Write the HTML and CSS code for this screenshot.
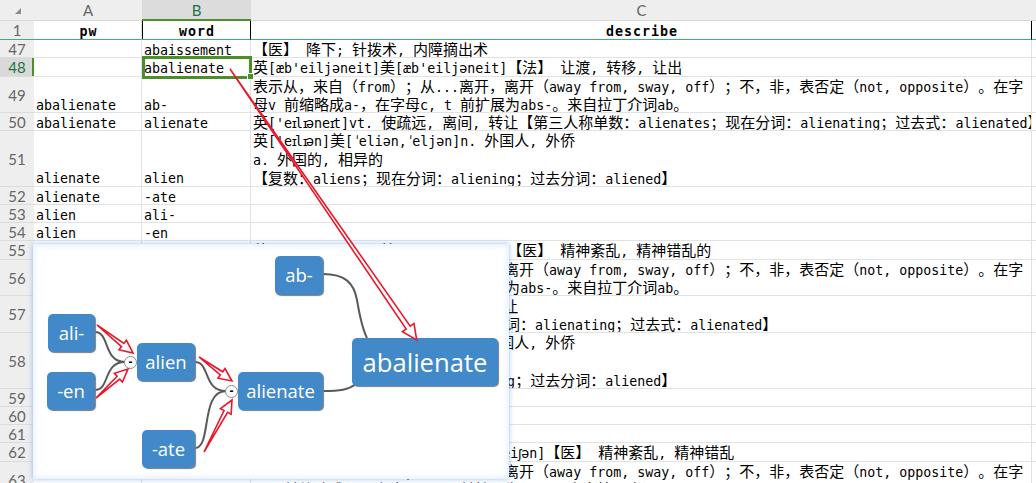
FILE: index.html
```html
<!DOCTYPE html>
<html lang="zh">
<head>
<meta charset="utf-8">
<title>word roots sheet</title>
<link rel="stylesheet" href="styles.css">
</head>
<body>
<div class="sheet">
  <div class="row head">
    <div class="rh corner"><span class="tri"></span></div>
    <div class="ch col-a">A</div>
    <div class="ch col-b on">B</div>
    <div class="ch col-c">C</div>
    <div class="ch col-r"></div>
  </div>
  <div class="row h19 frozen">
    <div class="rh">1</div>
    <div class="cell col-a t"><span>pw</span></div>
    <div class="cell col-b t edge"><span>word</span></div>
    <div class="cell col-c t edge"><span>describe</span></div>
    <div class="col-r"></div>
  </div>
  <div class="row h18">
    <div class="rh">47</div><div class="cell col-a"></div><div class="cell col-b">abaissement</div>
    <div class="cell col-c"><span class="z">【医】</span> <span class="z">降下</span>; <span class="z">针拨术</span>, <span class="z">内障摘出术</span></div><div class="col-r"></div>
  </div>
  <div class="row h19">
    <div class="rh sel-rh">48</div><div class="cell col-a"></div><div class="cell col-b sel">abalienate</div>
    <div class="cell col-c"><span class="z">英</span>[æb'eiljəneit]<span class="z">美</span>[æb'eiljəneit]<span class="z">【法】</span> <span class="z">让渡</span>, <span class="z">转移</span>, <span class="z">让出</span></div><div class="col-r"></div>
  </div>
  <div class="row h36">
    <div class="rh">49</div><div class="cell col-a">abalienate</div><div class="cell col-b">ab-</div>
    <div class="cell col-c"><span class="z">表示从，来自（</span>from<span class="z">）；从</span>...<span class="z">离开，离开（</span>away from, sway, off<span class="z">）；不，非，表否定（</span>not, opposite<span class="z">）。在字</span><br><span class="z">母</span>v <span class="z">前缩略成</span>a-<span class="z">，在字母</span>c, t <span class="z">前扩展为</span>abs-<span class="z">。来自拉丁介词</span>ab<span class="z">。</span></div><div class="col-r"></div>
  </div>
  <div class="row h18">
    <div class="rh">50</div><div class="cell col-a">abalienate</div><div class="cell col-b">alienate</div>
    <div class="cell col-c"><span class="z">英</span>['e<span class="n">ɪ</span>l<span class="n">ɪ</span>əne<span class="n">ɪ</span>t]vt. <span class="z">使疏远</span>, <span class="z">离间</span>, <span class="z">转让【第三人称单数：</span>alienates<span class="z">；现在分词：</span>alienating<span class="z">；过去式：</span>alienated<span class="z">】</span></div><div class="col-r"></div>
  </div>
  <div class="row h56">
    <div class="rh">51</div><div class="cell col-a">alienate</div><div class="cell col-b">alien</div>
    <div class="cell col-c"><span class="z">英</span>['e<span class="n">ɪ</span>l<span class="n">ɪ</span>ən]<span class="z">美</span>[<span class="q">ˈ</span>eliən,<span class="q">ˈ</span>eljən]n. <span class="z">外国人</span>, <span class="z">外侨</span><br>a. <span class="z">外国的</span>, <span class="z">相异的</span><br><span class="z">【复数：</span>aliens<span class="z">；现在分词：</span>aliening<span class="z">；过去分词：</span>aliened<span class="z">】</span></div><div class="col-r"></div>
  </div>
  <div class="row h18"><div class="rh">52</div><div class="cell col-a">alienate</div><div class="cell col-b">-ate</div><div class="cell col-c"></div><div class="col-r"></div></div>
  <div class="row h18"><div class="rh">53</div><div class="cell col-a">alien</div><div class="cell col-b">ali-</div><div class="cell col-c"></div><div class="col-r"></div></div>
  <div class="row h18"><div class="rh">54</div><div class="cell col-a">alien</div><div class="cell col-b">-en</div><div class="cell col-c"></div><div class="col-r"></div></div>
  <div class="row h19">
    <div class="rh">55</div><div class="cell col-a"></div><div class="cell col-b"></div>
    <div class="cell col-c"><span class="z">英</span>[æb'eiljəneit]<span class="z">美</span>[æb'eiljəneit]<span class="z">【医】</span> <span class="z">精神紊乱</span>, <span class="z">精神错乱的</span></div><div class="col-r"></div>
  </div>
  <div class="row h36">
    <div class="rh">56</div><div class="cell col-a"></div><div class="cell col-b"></div>
    <div class="cell col-c"><span class="z">表示从，来自（</span>from<span class="z">）；从</span>...<span class="z">离开，离开（</span>away from, sway, off<span class="z">）；不，非，表否定（</span>not, opposite<span class="z">）。在字</span><br><span class="z">母</span>v <span class="z">前缩略成</span>a-<span class="z">，在字母</span>c, t <span class="z">前扩展为</span>abs-<span class="z">。来自拉丁介词</span>ab<span class="z">。</span></div><div class="col-r"></div>
  </div>
  <div class="row h37">
    <div class="rh">57</div><div class="cell col-a"></div><div class="cell col-b"></div>
    <div class="cell col-c"><span class="z">英</span>['e<span class="n">ɪ</span>l<span class="n">ɪ</span>əne<span class="n">ɪ</span>t]vt. <span class="z">使疏远</span>, <span class="z">离间</span>, <span class="z">转让</span><br><span class="z">【第三人称单数：</span>alienates<span class="z">；现在分词：</span>alienating<span class="z">；过去式：</span>alienated<span class="z">】</span></div><div class="col-r"></div>
  </div>
  <div class="row h56">
    <div class="rh">58</div><div class="cell col-a"></div><div class="cell col-b"></div>
    <div class="cell col-c"><span class="z">英</span>['e<span class="n">ɪ</span>l<span class="n">ɪ</span>ən]<span class="z">美</span>[<span class="q">ˈ</span>eliən,<span class="q">ˈ</span>eljən]n. <span class="z">外国人</span>, <span class="z">外侨</span><br>a. <span class="z">外国的</span>, <span class="z">相异的</span><br><span class="z">【复数：</span>aliens<span class="z">；现在分词：</span>aliening<span class="z">；过去分词：</span>aliened<span class="z">】</span></div><div class="col-r"></div>
  </div>
  <div class="row h18"><div class="rh">59</div><div class="cell col-a"></div><div class="cell col-b"></div><div class="cell col-c"></div><div class="col-r"></div></div>
  <div class="row h18"><div class="rh">60</div><div class="cell col-a"></div><div class="cell col-b"></div><div class="cell col-c"></div><div class="col-r"></div></div>
  <div class="row h18"><div class="rh">61</div><div class="cell col-a"></div><div class="cell col-b"></div><div class="cell col-c"></div><div class="col-r"></div></div>
  <div class="row h19">
    <div class="rh">62</div><div class="cell col-a"></div><div class="cell col-b"></div>
    <div class="cell col-c"><span class="z">英</span>[æb,eiljə'nei<span class="s">ʃ</span>ən]<span class="z">美</span>[æb,eiljə'nei<span class="s">ʃ</span>ən]<span class="z">【医】</span> <span class="z">精神紊乱</span>, <span class="z">精神错乱</span></div><div class="col-r"></div>
  </div>
  <div class="row h36">
    <div class="rh">63</div><div class="cell col-a"></div><div class="cell col-b"></div>
    <div class="cell col-c"><span class="z">表示从，来自（</span>from<span class="z">）；从</span>...<span class="z">离开，离开（</span>away from, sway, off<span class="z">）；不，非，表否定（</span>not, opposite<span class="z">）。在字</span><br><span class="z">母</span>v <span class="z">前缩略成</span>a-<span class="z">，在字母</span>c, t <span class="z">前扩展为</span>abs-<span class="z">。来自拉丁介词</span>ab<span class="z">。</span></div><div class="col-r"></div>
  </div>

  <div class="panel">
    <svg class="links" width="476" height="235" viewBox="33 244 476 235" aria-hidden="true">
      <g class="link">
        <path d="M95 332C110 332 103 362 125 362"/>
        <path d="M95 390C110 390 103 362 125 362"/>
        <path d="M195 362C210 362 203 391 226 391"/>
        <path d="M195 448C212 448 200 391 226 391"/>
        <path d="M323 274C345 274 354 283 357 300C360 318 362 328 367 338"/>
        <path d="M323 391C340 391 348 390 356 384"/>
      </g>
    </svg>
    <div class="node n-ab">ab-</div>
    <div class="node n-ali">ali-</div>
    <div class="node n-en">-en</div>
    <div class="node n-alien">alien</div>
    <div class="node n-alienate">alienate</div>
    <div class="node n-ate">-ate</div>
    <div class="node n-root">abalienate</div>
    <div class="fold f1">-</div>
    <div class="fold f2">-</div>
  </div>

  <svg class="arrows" width="1036" height="483" viewBox="0 0 1036 483" aria-hidden="true">
    <polygon points="230,69 410.2,326.2 414,323.6 416.7,340 402.4,331.6 406.2,329"/>
    <polygon points="97,325 123.9,343.4 126.4,340.3 133,353 119,349.7 121.5,346.6"/>
    <polygon points="96,398 119.7,379.2 122.4,382.1 128,369 114.4,373.3 117.1,376.2"/>
    <polygon points="199,357 222.7,371.8 225,368.5 232,381 218,378.3 220.3,375"/>
    <polygon points="204,452 227.6,412.4 231.1,414.3 232,400 220.5,408.7 224,410.6"/>
  </svg>
</div>
</body>
</html>
```

FILE: styles.css
```css
html, body {
  margin: 0;
  padding: 0;
  background: #fff;
}

.sheet {
  position: relative;
  width: 1036px;
  height: 483px;
  overflow: hidden;
  font-family: "DejaVu Sans Mono", "Noto Sans CJK SC", monospace;
  font-size: 13.3px;
  color: #000;
}

.row {
  display: flex;
}

.head { height: 21px; }
.h18 { height: 18px; }
.h19 { height: 19px; }
.h36 { height: 36px; }
.h37 { height: 37px; }
.h56 { height: 56px; }

.rh {
  flex: none;
  box-sizing: border-box;
  width: 34px;
  display: flex;
  align-items: center;
  justify-content: center;
  background: #eeeeee;
  color: #666;
  font-family: Lato, "Liberation Sans", sans-serif;
  font-size: 15px;
  border-bottom: 1px solid #dcdcdc;
}

.corner {
  position: relative;
  border-bottom: 1px solid #d8d8d8;
}

.tri {
  position: absolute;
  left: 15px;
  top: 8px;
  width: 0;
  height: 0;
  border-left: 6px solid transparent;
  border-bottom: 6px solid #8c8c8c;
}

.sel-rh {
  background: #d9d9d9;
  color: #217346;
  box-shadow: inset -2px 0 0 #4a8f2a;
}

.ch {
  box-sizing: border-box;
  display: flex;
  align-items: center;
  justify-content: center;
  background: #eeeeee;
  color: #666;
  font-family: Lato, "Liberation Sans", sans-serif;
  font-size: 15px;
  border-bottom: 1px solid #d8d8d8;
}

.ch.on {
  background: #dcdcdc;
  color: #217346;
  border-bottom: 2px solid #4a8f2a;
}

.col-a { flex: none; width: 108px; }
.col-b { flex: none; width: 109px; }
.col-c { flex: none; width: 781px; }
.col-r { flex: none; width: 4px; box-sizing: border-box; border-bottom: 1px solid #e2e2e2; }
.ch.col-r { border-bottom: 1px solid #d8d8d8; }

.cell {
  box-sizing: border-box;
  padding: 2px 0 0 2px;
  border-right: 1px solid #e2e2e2;
  border-bottom: 1px solid #e2e2e2;
  line-height: 18px;
  white-space: nowrap;
  overflow: hidden;
}

.h56 .cell { padding-top: 1px; line-height: 19px; }
.h37 .cell { padding-top: 3px; }
.h36 .col-a, .h36 .col-b { padding-top: 20px; }
.h56 .col-a, .h56 .col-b { padding-top: 39px; line-height: 18px; }

.z {
  font-family: "Noto Sans CJK SC", sans-serif;
  font-size: 15px;
  line-height: 12px;
  text-spacing-trim: space-all;
}

.n {
  display: inline-block;
  width: 3px;
  font-family: "Liberation Sans", sans-serif;
}

.q {
  letter-spacing: -2.5px;
}

.s {
  font-family: "Liberation Sans", sans-serif;
}

.frozen .rh,
.frozen .cell,
.frozen .col-r {
  border-bottom: 1px solid #3fae82;
}

.t {
  text-align: center;
  font-weight: 700;
  letter-spacing: 1px;
}

.edge {
  border-right: 1px solid #000;
}

.frozen .col-b {
  box-shadow: inset 1px 0 0 #000;
}

.sel {
  position: relative;
  overflow: visible;
}

.sel::before {
  content: "";
  position: absolute;
  left: 0;
  top: -2px;
  right: -2px;
  bottom: -3px;
  border: 3px solid #4a8f2a;
  pointer-events: none;
}

.sel::after {
  content: "";
  position: absolute;
  right: -4px;
  bottom: -4px;
  width: 5px;
  height: 5px;
  background: #4a8f2a;
  border: 1px solid #fff;
  box-sizing: content-box;
}

.panel {
  position: absolute;
  left: 33px;
  top: 244px;
  width: 476px;
  height: 235px;
  background: #fff;
  box-shadow: 0 0 5px rgba(90, 155, 240, 0.65), inset 0 0 7px rgba(170, 205, 250, 0.45);
}

.links {
  position: absolute;
  left: 0;
  top: 0;
}

.link path {
  fill: none;
  stroke: #5a5a5a;
  stroke-width: 2;
}

.node {
  position: absolute;
  box-sizing: border-box;
  display: flex;
  align-items: center;
  justify-content: center;
  padding-bottom: 2px;
  background: #4289c9;
  border-radius: 5px;
  color: #fff;
  font-family: "Open Sans", "Liberation Sans", sans-serif;
  font-size: 18.5px;
  box-shadow: 1px 1px 1px #7d7d7d;
}

.n-ab { left: 242px; top: 12px; width: 48px; height: 39px; }
.n-ali { left: 15px; top: 70px; width: 47px; height: 38px; }
.n-en { left: 14px; top: 128px; width: 48px; height: 38px; }
.n-alien { left: 104px; top: 99px; width: 58px; height: 38px; }
.n-alienate { left: 205px; top: 128px; width: 85px; height: 38px; }
.n-ate { left: 109px; top: 186px; width: 53px; height: 38px; }
.n-root { left: 319px; top: 94px; width: 146px; height: 48px; font-size: 25.6px; padding-bottom: 0; }

.fold {
  position: absolute;
  box-sizing: border-box;
  width: 13px;
  height: 13px;
  border-radius: 50%;
  border: 1px solid #8a8a8a;
  background: #fff;
  color: #000;
  font-family: "Liberation Sans", sans-serif;
  font-size: 12px;
  font-weight: 700;
  line-height: 10px;
  text-align: center;
}

.f1 { left: 91px; top: 112px; }
.f2 { left: 192px; top: 141px; }

.arrows {
  position: absolute;
  left: 0;
  top: 0;
  pointer-events: none;
}

.arrows polygon {
  fill: #fff;
  stroke: #e8192c;
  stroke-width: 1.6;
  stroke-linejoin: miter;
}
```
